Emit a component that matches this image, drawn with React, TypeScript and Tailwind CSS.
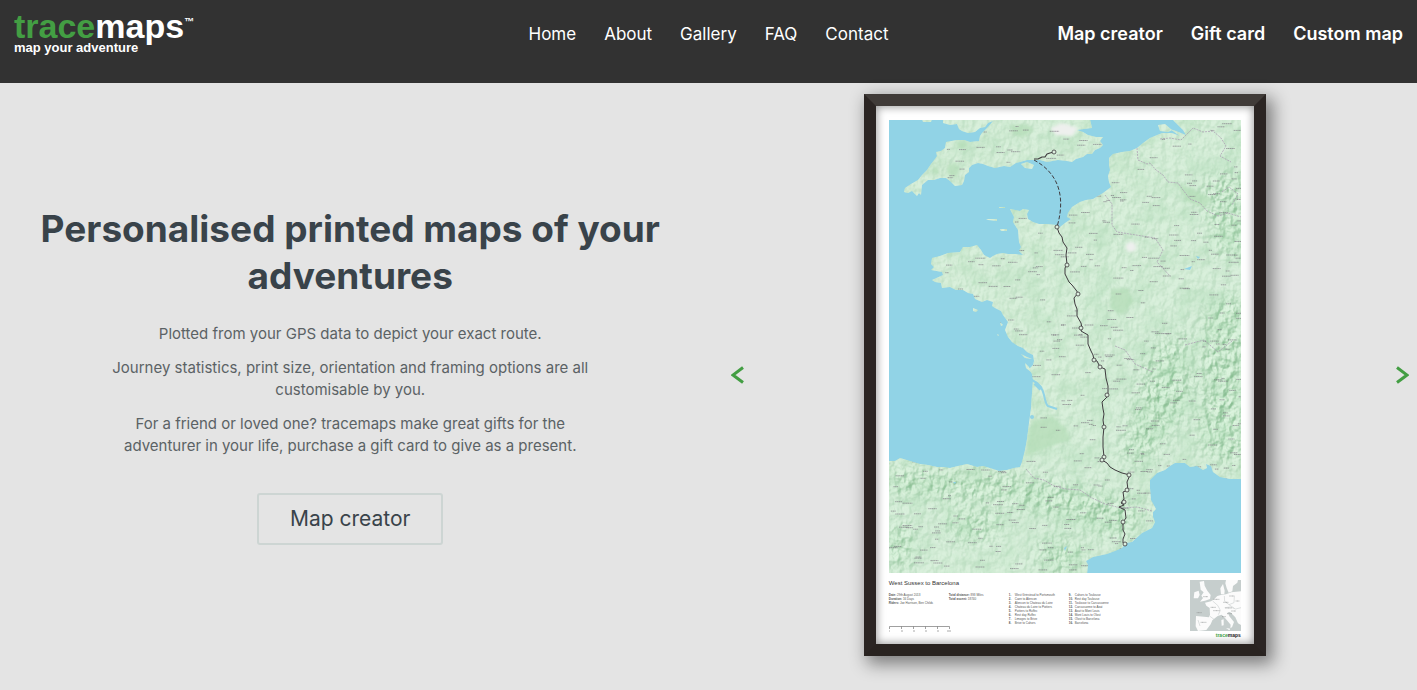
const mainLinks = ["Home", "About", "Gallery", "FAQ", "Contact"];
const shopLinks = ["Map creator", "Gift card", "Custom map"];

const stages = [
  "West Grinstead to Portsmouth",
  "Caen to Alencon",
  "Alencon to Chateau du Loire",
  "Chateau du Loire to Poitiers",
  "Poitiers to Ruffec",
  "Rest day Ruffec",
  "Limoges to Brive",
  "Brive to Cahors",
  "Cahors to Toulouse",
  "Rest day Toulouse",
  "Toulouse to Carcassonne",
  "Carcassonne to Axat",
  "Axat to Mont Louis",
  "Mont Louis to Olost",
  "Olost to Barcelona",
  "Barcelona",
];

const britain =
  "M943 119L943 123 950 125 957 124 959 129 962 131 968 133 975 132 980 128 985 127 988 123 993 121 988 127 982 133 980 136 979 141 970 142 964 140 957 140 946 142 945 148 941 151 936 152 937 156 935 159 931 164 927 170 922 175 918 180 911 184 905 188 904 192 908 193 912 191 915 194 917 196 919 193 921 195 922 185 928 180 934 180 940 178 946 178 950 181 955 186 962 185 964 181 965 175 969 172 969 168 972 165 978 163 983 164 988 166 995 168 1004 166 1010 167 1016 163 1020 162 1027 160 1033 160 1040 160 1047 162 1058 160 1067 161 1072 162 1076 159 1083 157 1087 154 1092 154 1095 150 1100 148 1103 145 1100 141 1103 137 1096 137 1088 135 1083 132 1077 130 1084 129 1092 128 1090 119Z";
const isles =
  "M922 119L932 119 931 122 923 122ZM1021 164L1027 162 1034 165 1032 169 1025 168ZM986 219L997 219 997 221 988 220ZM1000 229L1007 229 1007 231 1001 231ZM999 207L1005 207 1005 208 999 208ZM1158 125L1165 124 1172 130 1168 132 1160 131ZM973 308L978 310 976 312 973 311ZM1021 354L1027 357 1032 359 1025 358ZM1025 363L1029 367 1031 372 1026 368ZM1000 322L1003 325 1001 326ZM997 334L999 335 998 336Z";
const continent =
  "M1241 119L1172 119 1177 124 1183 130 1186 135 1176 131 1170 129 1180 136 1172 133 1162 133 1150 138 1143 143 1137 148 1130 151 1122 152 1113 154 1109 158 1109 165 1110 170 1108 176 1109 182 1111 187 1107 190 1103 193 1093 199 1086 200 1080 202 1072 207 1068 213 1067 217 1071 219 1065 223 1060 227 1057 225 1047 224 1039 224 1033 222 1028 219 1027 214 1029 210 1023 209 1020 211 1010 209 1014 217 1013 222 1018 230 1019 242 1021 247 1019 251 1023 255 1015 254 1008 254 1003 253 997 254 993 256 990 258 984 255 981 250 977 245 970 247 963 247 960 252 948 253 940 256 932 258 931 264 934 267 931 270 942 272 943 275 932 280 935 282 941 283 942 288 950 287 956 290 963 290 968 293 973 294 975 299 982 302 987 300 993 302 992 306 995 308 1001 311 1003 315 1008 322 1005 330 1008 337 1012 342 1018 346 1023 348 1027 352 1033 355 1034 361 1033 365 1029 369 1032 374 1033 380 1032 393 1031 408 1029 423 1027 439 1025 450 1022 462 1020 467 1014 468 1007 470 999 471 993 469 983 466 977 467 967 464 958 466 950 468 943 467 937 467 928 465 920 464 910 461 900 458 895 461 889 461 889 574 1087 574 1088 565 1086 561 1093 557 1107 554 1115 551 1122 548 1126 543 1132 542 1142 533 1152 528 1155 522 1153 517 1153 512 1156 509 1151 500 1150 488 1150 480 1157 473 1165 470 1170 466 1175 463 1185 463 1190 467 1197 466 1203 470 1207 468 1206 464 1211 466 1213 472 1220 477 1230 479 1241 479Z";

const route =
  "M1057 227L1059 233 1062 237 1063 242 1067 248 1066 255 1067 264 1065 268 1065 274 1069 282 1072 285 1076 290 1078 293 1074 298 1075 304 1077 309 1077 316 1081 323 1082 328 1081 331 1088 335 1088 344 1091 351 1093 355 1094 360 1097 361 1100 367 1105 369 1106 378 1108 386 1108 393 1107 397 1102 402 1103 409 1104 414 1103 420 1104 427 1103 437 1103 447 1104 457 1102 460 1107 463 1110 467 1115 470 1122 473 1130 475 1127 482 1128 490 1123 492 1124 499 1121 503 1124 505 1119 507 1125 510 1126 518 1123 522 1123 530 1125 534 1123 539 1123 543 1125 544";
const stops = [
  [1054, 152], [1057, 227], [1067, 265], [1078, 294], [1081, 328], [1094, 360], [1100, 367], [1107, 395],
  [1104, 427], [1104, 457], [1102, 460], [1129, 475], [1127, 490], [1124, 502], [1123, 522], [1125, 544],
];

const borders =
  "M1137 148L1138 160 1147 164 1150 163 1156 170 1163 175 1168 182 1178 183 1183 190 1190 199 1200 203 1207 211 1218 216 1228 213 1241 217M1160 139L1170 138 1181 140 1193 128 1203 132 1213 131 1221 138 1226 146 1220 156 1231 162M1222 192L1229 187 1238 194 1232 205M1026 469L1034 478 1044 480 1054 486 1066 489 1080 490 1092 498 1105 504 1121 508 1137 507 1152 511M1105 195L1112 204 1112 225 1117 232 1155 238 1163 250 1157 262 1170 276M1115 346L1125 350 1135 364 1153 372M1185 345L1204 340 1218 352 1232 341";

// Place names are far too small to read at this scale, so they are seeded ticks
function seededLabels(count: number) {
  let seed = 41;
  const next = () => {
    seed = (seed * 16807) % 2147483647;
    return seed / 2147483647;
  };
  let d = "";
  for (let i = 0; i < count; i++) {
    const x = 889 + next() * 350;
    const y = 121 + next() * 450;
    d += `M${x.toFixed(1)} ${y.toFixed(1)}h${(3 + next() * 7).toFixed(1)}`;
  }
  return d;
}

const labels = seededLabels(620);

function RouteMap() {
  return (
    <svg viewBox="889 120 352 453" className="block w-full" role="img" aria-label="Route from West Sussex to Barcelona">
      <defs>
        <clipPath id="land">
          <path d={britain} />
          <path d={isles} />
          <path d={continent} />
        </clipPath>
        <filter id="woods" x="0" y="0" width="100%" height="100%" colorInterpolationFilters="sRGB">
          <feTurbulence type="fractalNoise" baseFrequency="0.045" numOctaves="5" seed="8" />
          <feColorMatrix values="0 0 0 0 0.68  0 0 0 0 0.86  0 0 0 0 0.71  3 0 0 0 -1.25" />
        </filter>
        <filter id="relief" x="0" y="0" width="100%" height="100%" colorInterpolationFilters="sRGB">
          <feTurbulence type="fractalNoise" baseFrequency="0.14 0.11" numOctaves="4" seed="3" result="n" />
          <feColorMatrix in="n" values="0 0 0 0 0  0 0 0 0 0  0 0 0 0 0  1 0 0 0 0" />
          <feDiffuseLighting surfaceScale="5" diffuseConstant="1.1" lightingColor="#d8eedb">
            <feDistantLight azimuth="225" elevation="50" />
          </feDiffuseLighting>
          <feComponentTransfer>
            <feFuncR type="linear" slope="0.4" intercept="0.5" />
            <feFuncG type="linear" slope="0.24" intercept="0.72" />
            <feFuncB type="linear" slope="0.36" intercept="0.54" />
          </feComponentTransfer>
        </filter>
        <filter id="soft" x="-30%" y="-30%" width="160%" height="160%">
          <feGaussianBlur stdDeviation="9" />
        </filter>
        <filter id="edge">
          <feGaussianBlur stdDeviation="1.5" />
        </filter>
        <mask id="mountains" maskUnits="userSpaceOnUse" x="889" y="120" width="352" height="453">
          <rect x="889" y="120" width="352" height="453" fill="#444" />
          <g filter="url(#soft)" fill="#fff">
            <path d="M885 468L1000 474 1060 484 1150 505 1125 540 1070 520 1000 500 885 494Z" />
            <path d="M1205 310L1245 290 1245 470 1200 450Z" />
            <path d="M1150 350L1185 330 1190 400 1150 460 1120 465Z" />
            <path d="M1205 180L1245 170 1245 260 1215 250Z" />
            <ellipse cx="975" cy="525" rx="28" ry="14" />
            <ellipse cx="900" cy="545" rx="14" ry="25" />
            <ellipse cx="1060" cy="555" rx="25" ry="16" />
          </g>
        </mask>
      </defs>

      <rect x="889" y="120" width="352" height="453" fill="#91d3e6" />
      <g clipPath="url(#land)">
        <rect x="889" y="120" width="352" height="453" fill="#d8eedb" />
        <g mask="url(#mountains)">
          <rect x="889" y="120" width="352" height="453" filter="url(#relief)" opacity="0.9" />
        </g>
        <rect x="889" y="120" width="352" height="453" filter="url(#woods)" opacity="0.35" />
        <g fill="#b4ddb7" opacity="0.75" filter="url(#edge)">
          <path d="M1033 420L1052 416 1066 428 1071 440 1052 446 1026 456 1029 430Z" />
          <path d="M1111 289L1127 288 1134 302 1122 315 1110 308Z" />
          <path d="M1010 126L1026 124 1034 130 1024 137 1012 134Z" />
          <path d="M947 166L955 162 961 169 956 178 947 174ZM933 169L938 168 940 173 934 174ZM956 143L966 141 968 147 960 149Z" />
          <path d="M1177 184L1195 190 1212 199 1205 208 1188 202Z" />
        </g>
        <g fill="#eef0ee" filter="url(#edge)">
          <circle cx="1131" cy="247" r="5" />
          <path d="M1050 128L1062 123 1078 128 1072 136 1056 135Z" />
        </g>
        <path d={borders} fill="none" stroke="#a590ad" strokeWidth="0.8" strokeDasharray="2 1" opacity="0.8" />
        <path d={labels} fill="none" stroke="#756c7a" strokeWidth="1" strokeDasharray="1.4 0.4" opacity="0.6" />
      </g>
      <path d="M1032 380Q1042 385 1044 395T1048 406L1057 409" fill="none" stroke="#91d3e6" strokeWidth="2" />
      <path d="M1035 383L1041 389" fill="none" stroke="#91d3e6" strokeWidth="4" />
      <g fill="#91d3e6">
        <circle cx="1032" cy="417" r="2" />
        <path d="M1196 256L1200 257 1198 259ZM1184 269L1192 266 1190 270ZM953 482L956 482 955 484ZM1064 548L1067 546 1065 551Z" />
      </g>

      <g fill="none" stroke="#3f3b3f" strokeLinejoin="round">
        <path d="M1054 152L1050 153 1047 154 1045 157 1042 157 1038 159 1034 159" strokeWidth="1.2" />
        <path d="M1034 160C1049 168 1069 186 1057 227" strokeWidth="1" strokeDasharray="4 2" />
        <path d={route} strokeWidth="1" />
        {stops.map(([cx, cy]) => (
          <circle key={cy} cx={cx} cy={cy} r="2" fill="#dceede" strokeWidth="0.8" />
        ))}
      </g>
    </svg>
  );
}

function LocatorMap() {
  return (
    <svg viewBox="0 0 153 153" className="block w-full" role="img" aria-label="Western Europe">
      <rect width="153" height="153" fill="#c6cecd" />
      <g fill="#fbfbfb">
        <path d="M29 5L42 3 44 17 52 32 62 45 60 57 45 62 30 65 39 54 34 47 41 37 32 29Z" />
        <path d="M13 37L26 32 29 45 24 55 11 55Z" />
        <path d="M153 34L124 37 108 43 93 45 82 48 72 58 63 64 45 68 49 77 59 84 60 104 57 112 18 108 17 139 24 153 49 150 62 133 67 121 83 108 95 104 107 116 122 134 121 144 126 142 132 126 118 109 113 97 120 96 136 112 144 130 153 135Z" />
        <path d="M93 43L91 25 99 12 104 32 103 43ZM110 24L116 38 127 34 129 18 142 8 144 0 108 0 106 10Z" />
        <path d="M94 120L101 118 101 136 95 137ZM108 144L121 146 118 151Z" />
      </g>
      <path
        d="M68 63L83 76 91 91 85 104M103 48L104 64 117 74 132 68 133 49M24 120L30 138M60 109L72 118M104 83L121 81 137 87 153 83M117 74L133 85"
        fill="none"
        stroke="#cdd2d1"
        strokeWidth="2"
      />
      <path
        d="M70 58h18M100 67h16M40 50h14M62 82h15M70 92h19M106 84h19M111 101h16M32 127h17M118 48h16M137 63h12M124 93h14M20 98h16M96 110h12"
        fill="none"
        stroke="#8e9393"
        strokeWidth="2"
        strokeDasharray="3 1"
      />
    </svg>
  );
}

function StageList({ start, items }: { start: number; items: string[] }) {
  return (
    <ol className="w-[60px]">
      {items.map((stage, i) => (
        <li key={stage} className="flex whitespace-nowrap">
          <b className="w-[6px] shrink-0">{start + i}.</b>
          {stage}
        </li>
      ))}
    </ol>
  );
}

function FramedMap() {
  return (
    <figure className="w-full max-w-[402px] border-[12px] border-t-[#403b38] border-x-[#2b2523] border-b-[#292320] bg-white font-['Liberation_Sans',Arial,sans-serif] shadow-[5px_6px_16px_2px_rgba(0,0,0,0.45)]">
      <div className="px-[13px] pt-[14px] pb-[6px] shadow-[inset_0_0_9px_1px_rgba(0,0,0,0.4)]">
        <RouteMap />
        <figcaption className="flex justify-between pt-[7px] text-[3px] leading-[4px] text-[#555]">
          <div>
            <p className="text-[6px] leading-[6px] text-[#333]">West Sussex to Barcelona</p>
            <div className="flex pt-[7px] pb-[1px]">
              <div className="w-[60px]">
                <p><b>Date:</b> 29th August 2013</p>
                <p><b>Duration:</b> 16 Days</p>
                <p><b>Riders:</b> Joe Harrison, Ben Childs</p>
              </div>
              <div className="w-[60px]">
                <p><b>Total distance:</b> 893 Miles</p>
                <p><b>Total ascent:</b> 18740</p>
              </div>
              <StageList start={1} items={stages.slice(0, 8)} />
              <StageList start={9} items={stages.slice(8)} />
            </div>
            <svg viewBox="0 0 62 6" className="block w-[62px]" aria-hidden="true">
              <path d="M0.5 3V0.5H60.5V3M12.5 0.5V3M24.5 0.5V3M36.5 0.5V3M48.5 0.5V3" fill="none" stroke="#777" strokeWidth="0.7" />
              <path d="M0 5H1M12 5H14M24 5H26M36 5H38M48 5H50M58 5H62" stroke="#aaa" />
            </svg>
          </div>
          <div className="w-[51px]">
            <LocatorMap />
            <p className="pt-[1px] text-right text-[5px] leading-[6px] font-bold text-[#222]">
              <span className="text-[#3f9f46]">trace</span>maps
            </p>
          </div>
        </figcaption>
      </div>
    </figure>
  );
}

function Logo() {
  return (
    <a href="#" className="block font-['Liberation_Sans',Arial,sans-serif] font-bold text-white">
      <span className="flex items-start text-[34px] leading-[26px]">
        <span className="text-[#439e43]">trace</span>maps
        <span className="text-[10px] leading-[18px]">™</span>
      </span>
      <span className="block text-[13px] leading-[18px]">map your adventure</span>
    </a>
  );
}

export default function App() {
  return (
    <div className="min-h-screen bg-[#e4e4e4] font-[Inter,sans-serif]">
      <header className="grid h-[83px] grid-cols-[1fr_auto_1fr] items-start bg-[#323232] px-[14px] pt-[13px] leading-[42px] text-white">
        <Logo />
        <nav className="flex gap-7 text-[17px]">
          {mainLinks.map((link) => (
            <a key={link} href="#" className="hover:text-[#439e43]">{link}</a>
          ))}
        </nav>
        <nav className="flex justify-end gap-7 text-lg leading-[42px] font-semibold">
          {shopLinks.map((link) => (
            <a key={link} href="#" className="hover:text-[#439e43]">{link}</a>
          ))}
        </nav>
      </header>

      <main className="grid grid-cols-2 items-center gap-4 pt-[11px] pb-8">
        <section className="flex flex-col items-center px-8 text-center text-[#5b6265]">
          <h1 className="text-[37px] leading-[47px] font-bold text-[#39434a]">
            Personalised printed maps of your adventures
          </h1>
          <div className="mt-6 max-w-[500px] space-y-3 text-[15px] leading-[22px]">
            <p>Plotted from your GPS data to depict your exact route.</p>
            <p>Journey statistics, print size, orientation and framing options are all customisable by you.</p>
            <p>
              For a friend or loved one? tracemaps make great gifts for the adventurer in your life, purchase a gift
              card to give as a present.
            </p>
          </div>
          <button className="mt-9 h-[52px] rounded-[3px] border-2 border-[#cdd5d3] px-[31px] text-[21px] text-[#39434a]">
            Map creator
          </button>
        </section>

        <section className="flex items-center justify-between pr-2 pl-[14px]">
          <button aria-label="Previous map">
            <svg width="13" height="18" viewBox="0 0 13 18" fill="none" stroke="#439e43" strokeWidth="3">
              <path d="M12 1.5L2 9L12 16.5" />
            </svg>
          </button>
          <FramedMap />
          <button aria-label="Next map" className="pl-[10px]">
            <svg width="13" height="18" viewBox="0 0 13 18" fill="none" stroke="#439e43" strokeWidth="3">
              <path d="M1 1.5L11 9L1 16.5" />
            </svg>
          </button>
        </section>
      </main>
    </div>
  );
}
